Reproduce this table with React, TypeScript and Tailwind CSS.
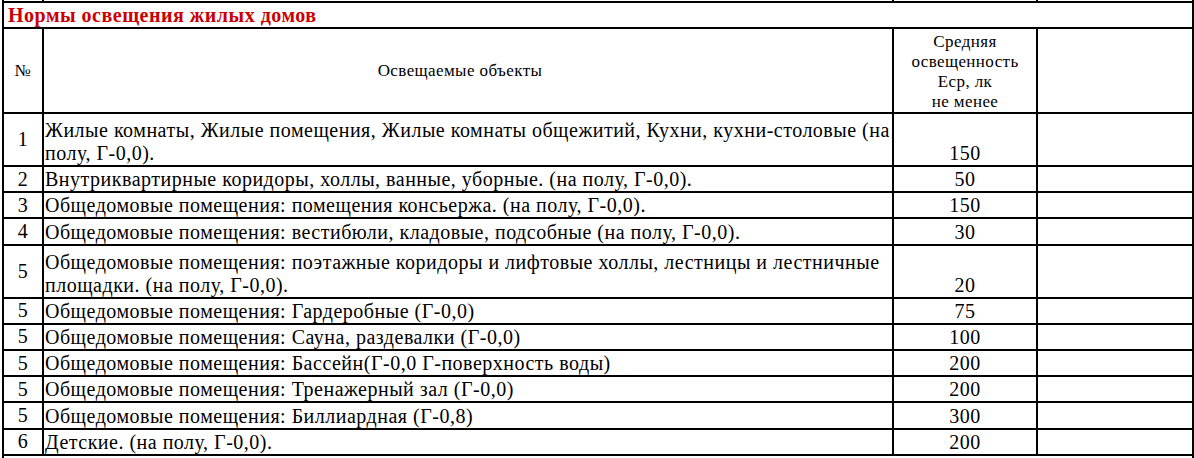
import React from "react";

type Row = { n: string; lines: string[]; v: string; double?: boolean };

const rows: Row[] = [
  { n: "1", lines: ["Жилые комнаты, Жилые помещения, Жилые комнаты общежитий, Кухни, кухни-столовые (на", "полу, Г-0,0)."], v: "150", double: true },
  { n: "2", lines: ["Внутриквартирные коридоры, холлы, ванные, уборные. (на полу, Г-0,0)."], v: "50" },
  { n: "3", lines: ["Общедомовые помещения: помещения консьержа. (на полу, Г-0,0)."], v: "150" },
  { n: "4", lines: ["Общедомовые помещения: вестибюли, кладовые, подсобные (на полу, Г-0,0)."], v: "30" },
  { n: "5", lines: ["Общедомовые помещения: поэтажные коридоры и лифтовые холлы, лестницы и лестничные", "площадки. (на полу, Г-0,0)."], v: "20", double: true },
  { n: "5", lines: ["Общедомовые помещения: Гардеробные (Г-0,0)"], v: "75" },
  { n: "5", lines: ["Общедомовые помещения: Сауна, раздевалки (Г-0,0)"], v: "100" },
  { n: "5", lines: ["Общедомовые помещения: Бассейн(Г-0,0 Г-поверхность воды)"], v: "200" },
  { n: "5", lines: ["Общедомовые помещения: Тренажерный зал (Г-0,0)"], v: "200" },
  { n: "5", lines: ["Общедомовые помещения: Биллиардная (Г-0,8)"], v: "300" },
  { n: "6", lines: ["Детские. (на полу, Г-0,0)."], v: "200" },
];

export default function App() {
  return (
    <div className="w-[1194px] h-[458px] overflow-hidden bg-white text-black font-['Liberation_Serif','Times_New_Roman',serif]">
      <div className="ml-[2px] w-[1192px]">
        {/* stub of previous row */}
        <div className="flex h-[1px] border-l-2 border-black">
          <div className="w-[40px] border-r-2 border-black" />
          <div className="w-[850px] border-r-2 border-black" />
          <div className="w-[144px] border-r-2 border-black" />
          <div className="w-[156px] border-r-2 border-black" />
        </div>
        {/* title */}
        <div className="flex h-[28px] items-center border-2 border-black pl-[4px]">
          <span className="text-[20px] font-bold tracking-[0.5px] text-[#cc0000] leading-none">Нормы освещения жилых домов</span>
        </div>
        {/* header */}
        <div className="flex h-[85px] border-l-2 border-b-2 border-black text-[17px] tracking-[0.4px]">
          <div className="flex w-[40px] items-center justify-center border-r-2 border-black">№</div>
          <div className="flex w-[850px] items-center justify-center border-r-2 border-black pr-[16px]">Освещаемые объекты</div>
          <div className="flex w-[144px] flex-col items-center justify-center border-r-2 border-black pt-[3px] leading-[20px]">
            <span>Средняя</span>
            <span>освещенность</span>
            <span>Еср, лк</span>
            <span>не менее</span>
          </div>
          <div className="w-[156px] border-r-2 border-black" />
        </div>
        {rows.map((r, i) => (
          <div
            key={i}
            className={`flex border-l-2 border-b-2 border-black text-[20px] tracking-[0.5px] leading-[23px] ${r.double ? "h-[53px]" : "h-[26.2px]"}`}
          >
            <div className="flex w-[40px] items-center justify-center border-r-2 border-black">{r.n}</div>
            <div className="flex w-[850px] flex-col justify-end whitespace-nowrap border-r-2 border-black pl-[1px]">
              {r.lines.map((l, j) => (
                <span key={j}>{l}</span>
              ))}
            </div>
            <div className="flex w-[144px] items-end justify-center border-r-2 border-black">{r.v}</div>
            <div className="w-[156px] border-r-2 border-black" />
          </div>
        ))}
        <div className="h-[10px] border-l-2 border-r-2 border-black" />
      </div>
    </div>
  );
}
